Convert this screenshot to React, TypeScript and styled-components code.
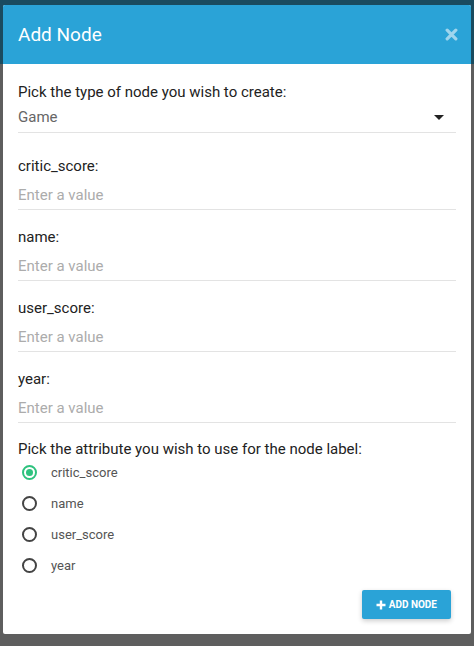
import React, { useState } from "react";
import styled, { createGlobalStyle } from "styled-components";

const GlobalStyle = createGlobalStyle`
  html, body {
    margin: 0;
    padding: 0;
    background: linear-gradient(to bottom, #1a4b5f 0, #1a4b5f 64px, #5e5e5e 64px, #5e5e5e 100%);
    font-family: Roboto, "Noto Sans", Arial, sans-serif;
  }
  * { box-sizing: border-box; }
`;

const Backdrop = styled.div`
  width: 474px;
  height: 646px;
  padding: 5px 3px 12px 3px;
`;

const Modal = styled.div`
  width: 468px;
  height: 629px;
  background: #fff;
  border-radius: 2px;
  display: flex;
  flex-direction: column;
  overflow: hidden;
`;

const Header = styled.div`
  flex-shrink: 0;
  height: 59px;
  background: #2aa3d7;
  display: flex;
  align-items: center;
  justify-content: space-between;
  padding: 0 13px 0 15px;
`;

const Title = styled.h2`
  margin: 0;
  color: #fff;
  font-size: 19px;
  font-weight: 400;
`;

const Close = styled.button`
  border: 0;
  background: none;
  padding: 0;
  display: flex;
  cursor: pointer;
  color: rgba(255, 255, 255, 0.55);
`;

const Body = styled.div`
  flex: 1;
  display: flex;
  flex-direction: column;
  padding: 19px 15px 0 15px;
`;

const Label = styled.div`
  font-size: 15px;
  color: #222;
  line-height: 18px;
`;

const SelectRow = styled.div`
  display: flex;
  align-items: center;
  justify-content: space-between;
  height: 32px;
  margin-bottom: 6px;
  border-bottom: 1px solid #e3e3e3;
  font-size: 15px;
  color: #666;
  padding: 1px 12px 0 0;
`;

const Caret = styled.span`
  width: 0;
  height: 0;
  border-left: 5px solid transparent;
  border-right: 5px solid transparent;
  border-top: 5px solid #222;
`;

const Field = styled.div`
  display: flex;
  flex-direction: column;
  margin-top: 18px;
`;

const Input = styled.input`
  border: 0;
  border-bottom: 1px solid #e3e3e3;
  height: 35px;
  padding: 5px 0 0;
  font-family: inherit;
  font-size: 15px;
  color: #333;
  outline: none;
  &::placeholder {
    color: #acacac;
  }
`;

const Section = styled.div`
  margin-top: 17px;
`;

const RadioList = styled.div`
  display: flex;
  flex-direction: column;
  gap: 11px;
  margin-top: 4px;
  padding-left: 4px;
`;

const RadioRow = styled.label`
  display: flex;
  align-items: center;
  gap: 14px;
  height: 20px;
  font-size: 13px;
  color: #555;
  cursor: pointer;
`;

const RadioDot = styled.span<{ $checked: boolean }>`
  width: 15px;
  height: 15px;
  border-radius: 50%;
  border: 2px solid ${(p) => (p.$checked ? "#2ec27e" : "#444")};
  display: flex;
  align-items: center;
  justify-content: center;
  &::after {
    content: "";
    width: 7px;
    height: 7px;
    border-radius: 50%;
    background: ${(p) => (p.$checked ? "#2ec27e" : "transparent")};
  }
`;

const Footer = styled.div`
  display: flex;
  justify-content: flex-end;
  padding: 15px 5px 0 0;
`;

const AddButton = styled.button`
  display: flex;
  align-items: center;
  gap: 3px;
  height: 29px;
  padding: 0 14px;
  border: 0;
  border-radius: 2px;
  background: #2aa3d7;
  color: #fff;
  font-family: inherit;
  font-size: 10px;
  font-weight: 700;
  box-shadow: 0 2px 5px rgba(0, 0, 0, 0.2);
  cursor: pointer;
`;

const fields = ["critic_score", "name", "user_score", "year"];

export default function App() {
  const [labelAttr, setLabelAttr] = useState("critic_score");
  return (
    <>
      <GlobalStyle />
      <Backdrop>
        <Modal>
          <Header>
            <Title>Add Node</Title>
            <Close aria-label="close">
              <svg width="13" height="13" viewBox="0 0 12 12">
                <path d="M2 2 L10 10 M10 2 L2 10" stroke="currentColor" strokeWidth="3" strokeLinecap="round" />
              </svg>
            </Close>
          </Header>
          <Body>
            <Label>Pick the type of node you wish to create:</Label>
            <SelectRow>
              <span>Game</span>
              <Caret />
            </SelectRow>
            {fields.map((f) => (
              <Field key={f}>
                <Label>{f}:</Label>
                <Input placeholder="Enter a value" />
              </Field>
            ))}
            <Section>
              <Label>Pick the attribute you wish to use for the node label:</Label>
              <RadioList>
                {fields.map((f) => (
                  <RadioRow key={f} onClick={() => setLabelAttr(f)}>
                    <RadioDot $checked={labelAttr === f} />
                    {f}
                  </RadioRow>
                ))}
              </RadioList>
            </Section>
            <Footer>
              <AddButton>
                <svg width="10" height="10" viewBox="0 0 10 10">
                  <path d="M5 0.5 V9.5 M0.5 5 H9.5" stroke="#fff" strokeWidth="2.4" />
                </svg>
                ADD NODE
              </AddButton>
            </Footer>
          </Body>
        </Modal>
      </Backdrop>
    </>
  );
}
